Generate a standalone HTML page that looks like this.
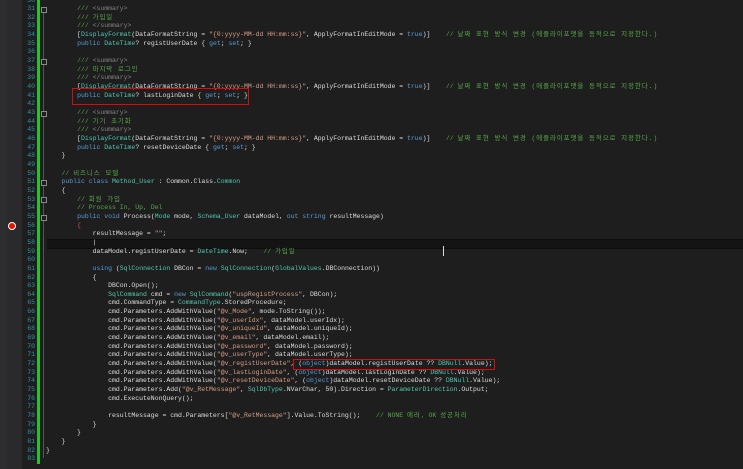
<!DOCTYPE html>
<html><head><meta charset="utf-8"><style>
html,body{margin:0;width:743px;height:469px;overflow:hidden;background:#1e1e1e;}
body{position:relative;font-family:"Liberation Mono","Noto Sans CJK KR",monospace;}
#strip{position:absolute;left:0;top:0;width:7px;height:469px;background:#2d2d30;}
#strip2{position:absolute;left:7px;top:0;width:15px;height:469px;background:#2a2a2c;}
#green{position:absolute;left:37px;top:0;width:3px;height:464px;background:#2bc02b;}
#cur{position:absolute;left:47px;right:0;top:239px;height:8px;background:#141414;border-top:1px solid #0c0c0c;border-bottom:1px solid #0c0c0c;}
#nums{position:absolute;left:0;width:35px;top:-3.5px;text-align:right;color:#2b91af;font-size:6.5px;}
#code{position:absolute;left:46px;top:-3.5px;color:#dcdcdc;font-size:6.48px;}
.l{height:8.667px;line-height:8.667px;white-space:pre;overflow:visible;}
.k{color:#569cd6}.t{color:#4ec9b0}.s{color:#d69d85}.c{color:#57a64a}.x{color:#808080}
.h{letter-spacing:0.9px}
.box{position:absolute;border:1.5px solid #d01010;}
.fold{position:absolute;left:41px;width:4px;height:4px;border:1px solid #888;background:#1e1e1e}
#bp{position:absolute;left:8px;top:222px;width:8px;height:8px;border-radius:50%;background:#e51400;border:0.5px solid #fff;box-sizing:border-box}
#fl{position:absolute;left:43px;top:12px;width:1px;height:446px;background:#555}
#ib{position:absolute;left:443px;top:246px;width:1px;height:10px;background:#ddd}
</style></head><body>
<div id="strip"></div><div id="strip2"></div>
<div id="cur"></div>
<div id="fl"></div>
<div id="green"></div>
<div class="fold" style="top:7px"></div>
<div class="fold" style="top:59px"></div>
<div class="fold" style="top:111px"></div>
<div class="fold" style="top:180px"></div>
<div class="fold" style="top:197px"></div>
<div class="fold" style="top:215px"></div>
<div id="bp"></div>
<div id="nums"><div class="l">30</div><div class="l">31</div><div class="l">32</div><div class="l">33</div><div class="l">34</div><div class="l">35</div><div class="l">36</div><div class="l">37</div><div class="l">38</div><div class="l">39</div><div class="l">40</div><div class="l">41</div><div class="l">42</div><div class="l">43</div><div class="l">44</div><div class="l">45</div><div class="l">46</div><div class="l">47</div><div class="l">48</div><div class="l">49</div><div class="l">50</div><div class="l">51</div><div class="l">52</div><div class="l">53</div><div class="l">54</div><div class="l">55</div><div class="l">56</div><div class="l">57</div><div class="l">58</div><div class="l">59</div><div class="l">60</div><div class="l">61</div><div class="l">62</div><div class="l">63</div><div class="l">64</div><div class="l">65</div><div class="l">66</div><div class="l">67</div><div class="l">68</div><div class="l">69</div><div class="l">70</div><div class="l">71</div><div class="l">72</div><div class="l">73</div><div class="l">74</div><div class="l">75</div><div class="l">76</div><div class="l">77</div><div class="l">78</div><div class="l">79</div><div class="l">80</div><div class="l">81</div><div class="l">82</div><div class="l">83</div></div>
<div id="code"><div class="l"> </div><div class="l">        <span class="c">/// </span><span class="x">&lt;summary&gt;</span></div><div class="l">        <span class="c">/// <span class="h">가입일</span></span></div><div class="l">        <span class="c">/// </span><span class="x">&lt;/summary&gt;</span></div><div class="l">        [<span class="t">DisplayFormat</span>(DataFormatString = <span class="s">"{0:yyyy-MM-dd HH:mm:ss}"</span>, ApplyFormatInEditMode = <span class="k">true</span>)]    <span class="c">// <span class="h">날짜 표현 방식 변경 (에플라이포맷을 동적으로 지정한다.)</span></span></div><div class="l">        <span class="k">public</span> <span class="t">DateTime</span>? registUserDate { <span class="k">get</span>; <span class="k">set</span>; }</div><div class="l"> </div><div class="l">        <span class="c">/// </span><span class="x">&lt;summary&gt;</span></div><div class="l">        <span class="c">/// <span class="h">마지막 로그인</span></span></div><div class="l">        <span class="c">/// </span><span class="x">&lt;/summary&gt;</span></div><div class="l">        [<span class="t">DisplayFormat</span>(DataFormatString = <span class="s">"{0:yyyy-MM-dd HH:mm:ss}"</span>, ApplyFormatInEditMode = <span class="k">true</span>)]    <span class="c">// <span class="h">날짜 표현 방식 변경 (에플라이포맷을 동적으로 지정한다.)</span></span></div><div class="l">        <span class="k">public</span> <span class="t">DateTime</span>? lastLoginDate { <span class="k">get</span>; <span class="k">set</span>; }</div><div class="l"> </div><div class="l">        <span class="c">/// </span><span class="x">&lt;summary&gt;</span></div><div class="l">        <span class="c">/// <span class="h">기기 초기화</span></span></div><div class="l">        <span class="c">/// </span><span class="x">&lt;/summary&gt;</span></div><div class="l">        [<span class="t">DisplayFormat</span>(DataFormatString = <span class="s">"{0:yyyy-MM-dd HH:mm:ss}"</span>, ApplyFormatInEditMode = <span class="k">true</span>)]    <span class="c">// <span class="h">날짜 표현 방식 변경 (에플라이포맷을 동적으로 지정한다.)</span></span></div><div class="l">        <span class="k">public</span> <span class="t">DateTime</span>? resetDeviceDate { <span class="k">get</span>; <span class="k">set</span>; }</div><div class="l">    }</div><div class="l"> </div><div class="l">    <span class="c">// <span class="h">비즈니스 모델</span></span></div><div class="l">    <span class="k">public</span> <span class="k">class</span> <span class="t">Method_User</span> : Common.Class.<span class="t">Common</span></div><div class="l">    {</div><div class="l">        <span class="c">// <span class="h">회원 가입</span></span></div><div class="l">        <span class="c">// Process In, Up, Del</span></div><div class="l">        <span class="k">public</span> <span class="k">void</span> Process(<span class="t">Mode</span> mode, <span class="t">Schema_User</span> dataModel, <span class="k">out</span> <span class="k">string</span> resultMessage)</div><div class="l">        <span style="color:#e05050">{</span></div><div class="l">            resultMessage = <span class="s">""</span>;</div><div class="l">            |</div><div class="l">            dataModel.registUserDate = <span class="t">DateTime</span>.Now;    <span class="c">// <span class="h">가입일</span></span></div><div class="l"> </div><div class="l">            <span class="k">using</span> (<span class="t">SqlConnection</span> DBCon = <span class="k">new</span> <span class="t">SqlConnection</span>(<span class="t">GlobalValues</span>.DBConnection))</div><div class="l">            {</div><div class="l">                DBCon.Open();</div><div class="l">                <span class="t">SqlCommand</span> cmd = <span class="k">new</span> <span class="t">SqlCommand</span>(<span class="s">"uspRegistProcess"</span>, DBCon);</div><div class="l">                cmd.CommandType = <span class="t">CommandType</span>.StoredProcedure;</div><div class="l">                cmd.Parameters.AddWithValue(<span class="s">"@v_Mode"</span>, mode.ToString());</div><div class="l">                cmd.Parameters.AddWithValue(<span class="s">"@v_userIdx"</span>, dataModel.userIdx);</div><div class="l">                cmd.Parameters.AddWithValue(<span class="s">"@v_uniqueId"</span>, dataModel.uniqueId);</div><div class="l">                cmd.Parameters.AddWithValue(<span class="s">"@v_email"</span>, dataModel.email);</div><div class="l">                cmd.Parameters.AddWithValue(<span class="s">"@v_password"</span>, dataModel.password);</div><div class="l">                cmd.Parameters.AddWithValue(<span class="s">"@v_userType"</span>, dataModel.userType);</div><div class="l">                cmd.Parameters.AddWithValue(<span class="s">"@v_registUserDate"</span>, (<span class="k">object</span>)dataModel.registUserDate ?? <span class="t">DBNull</span>.Value);</div><div class="l">                cmd.Parameters.AddWithValue(<span class="s">"@v_lastLoginDate"</span>, (<span class="k">object</span>)dataModel.lastLoginDate ?? <span class="t">DBNull</span>.Value);</div><div class="l">                cmd.Parameters.AddWithValue(<span class="s">"@v_resetDeviceDate"</span>, (<span class="k">object</span>)dataModel.resetDeviceDate ?? <span class="t">DBNull</span>.Value);</div><div class="l">                cmd.Parameters.Add(<span class="s">"@v_RetMessage"</span>, <span class="t">SqlDbType</span>.NVarChar, 50).Direction = <span class="t">ParameterDirection</span>.Output;</div><div class="l">                cmd.ExecuteNonQuery();</div><div class="l"> </div><div class="l">                resultMessage = cmd.Parameters[<span class="s">"@v_RetMessage"</span>].Value.ToString();    <span class="c">// NONE <span class="h">에러</span>, OK <span class="h">성공처리</span></span></div><div class="l">            }</div><div class="l">        }</div><div class="l">    }</div><div class="l">}</div><div class="l"> </div></div>
<div class="box" style="left:72px;top:88px;width:175px;height:15px"></div>
<div class="box" style="left:293px;top:359px;width:200px;height:9px"></div>
<div id="ib"></div>
</body></html>
